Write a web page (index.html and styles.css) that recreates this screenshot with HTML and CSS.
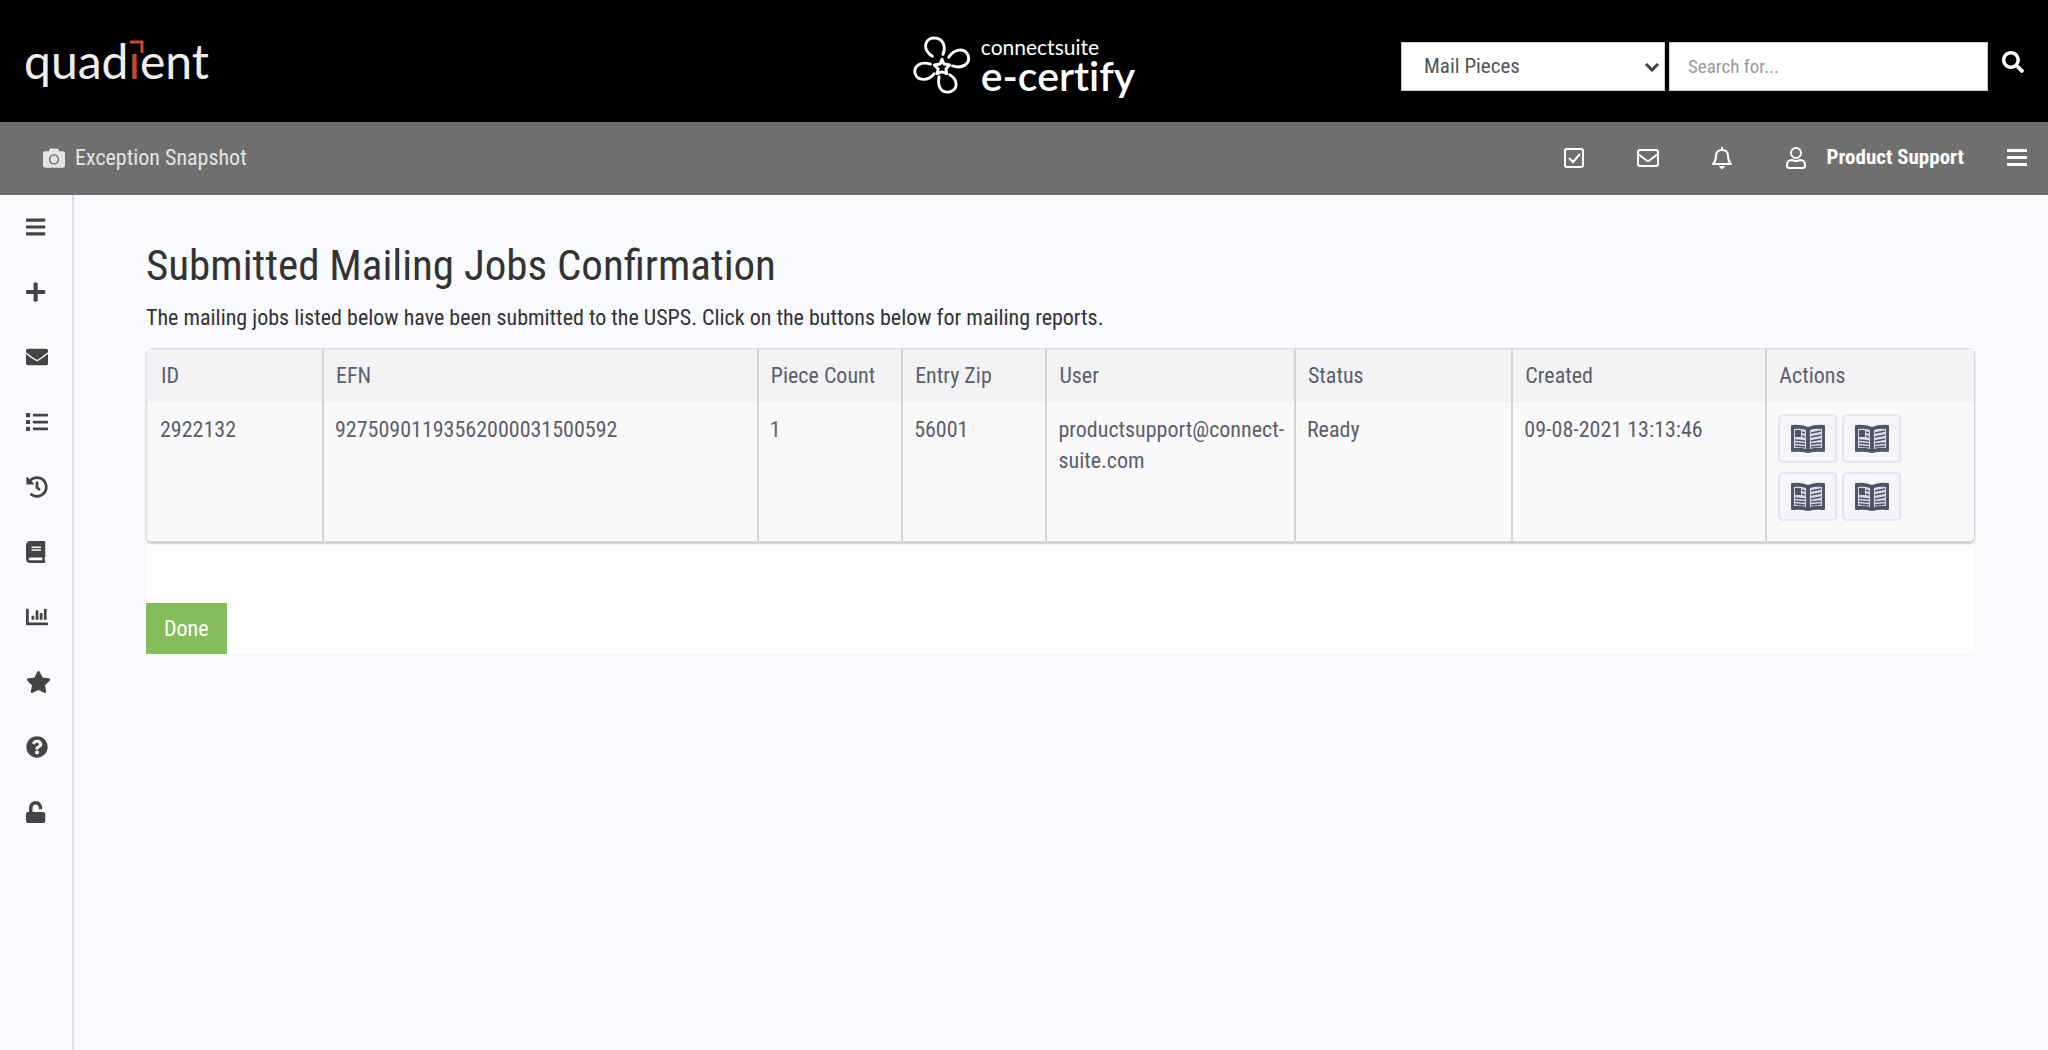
FILE: index.html
```
<!DOCTYPE html>
<html lang="en">
<head>
  <meta charset="UTF-8">
  <meta name="viewport" content="width=device-width, initial-scale=1.0">
  <title>Submitted Mailing Jobs Confirmation</title>
  <link rel="stylesheet" href="styles.css">
</head>
<body>
  <!-- shared icon shapes -->
  <svg class="sprite" aria-hidden="true">
    <symbol id="book-open" viewBox="0 0 36 30">
      <path d="M2 2Q10 1 18 4Q26 1 34 2V27Q26 26 18 28Q10 26 2 27Z" fill="#525566" stroke="#525566" stroke-width="2" stroke-linejoin="round"/>
      <path d="M4 5Q10 4 16 6V25Q10 23 4 24ZM20 6Q26 4 32 5V24Q26 23 20 25Z" fill="#d9dce5"/>
      <path d="M5 6h6v7H5z" fill="#525566"/>
      <path d="M12 8l3 1M12 12l3 1M5 16l10 1M5 19l10 1M5 22l10 1M21 9l10-2M21 13l10-2M21 17l10-2M21 20l10-1M21 23l10-1" fill="none" stroke="#525566" stroke-width="1.5"/>
    </symbol>
  </svg>

  <header class="top">
    <a href="#" class="logo" aria-label="quadient">quad<span class="logo-i">i<svg class="flag" viewBox="0 0 14 14"><path d="M0 0h14v14H0z" fill="#000"/><path d="M0 2h12v11" fill="none" stroke="#c8472f" stroke-width="3"/></svg></span>ent</a>

    <a href="#" class="brand">
      <svg class="flower" viewBox="0 0 60 60" fill="none" stroke="#fff" stroke-width="3" stroke-linecap="round">
        <path d="M20 21C9 14 12 2 22 2C32 2 34 12 31 19"/>
        <path d="M37 22C42 14 53 11 57 20C60 30 49 34 41 31"/>
        <path d="M18 29C8 26 1 31 2 38C4 47 16 47 22 39"/>
        <path d="M27 42C25 52 29 59 37 58C47 56 47 46 38 40"/>
        <path d="M30 24l2 5 6 1-4 4 1 5-5-2-5 2 1-5-4-4 6-1z" stroke-linejoin="round"/>
      </svg>
      <span class="brand-text">
        <span class="brand-small">connectsuite</span>
        <span class="brand-big">e-certify</span>
      </span>
    </a>

    <form class="search">
      <div class="select-wrap">
        <select aria-label="Search in">
          <option>Mail Pieces</option>
        </select>
        <svg class="chevron" viewBox="0 0 14 10"><path d="M1 2l6 6 6-6" fill="none" stroke="#444" stroke-width="3"/></svg>
      </div>
      <input type="text" placeholder="Search for..." aria-label="Search for">
      <button type="submit" class="search-btn" aria-label="Search">
        <svg viewBox="0 0 512 512"><path d="M505 442.700L405.300 343c-4.500-4.500-10.600-7-17-7H372c27.600-35.300 44-79.700 44-128C416 93.100 322.900 0 208 0S0 93.100 0 208s93.100 208 208 208c48.300 0 92.700-16.400 128-44v16.300c0 6.400 2.500 12.500 7 17l99.700 99.700c9.400 9.400 24.600 9.400 33.900 0l28.300-28.300c9.400-9.400 9.400-24.600.1-34zM208 336c-70.700 0-128-57.200-128-128 0-70.700 57.200-128 128-128 70.700 0 128 57.200 128 128 0 70.700-57.200 128-128 128z"/></svg>
      </button>
    </form>
  </header>

  <nav class="bar">
    <a href="#" class="snapshot">
      <svg class="icon" viewBox="0 0 512 512"><path d="M512 144v288c0 26.500-21.500 48-48 48H48c-26.500 0-48-21.500-48-48V144c0-26.500 21.500-48 48-48h88l12.300-32.900c7-18.700 24.900-31.100 44.900-31.100h125.500c20 0 37.900 12.400 44.900 31.100L376 96h88c26.500 0 48 21.500 48 48zM376 288c0-66.200-53.800-120-120-120s-120 53.800-120 120 53.800 120 120 120 120-53.800 120-120zm-32 0c0 48.500-39.500 88-88 88s-88-39.500-88-88 39.500-88 88-88 88 39.500 88 88z"/></svg>
      Exception Snapshot
    </a>
    <div class="bar-right">
      <a href="#" aria-label="Tasks"><svg class="icon" viewBox="0 0 22 22" fill="none" stroke="#fff" stroke-width="2"><rect x="2" y="2" width="18" height="18" rx="2"/><path d="M6 11l4 4 7-8"/></svg></a>
      <a href="#" aria-label="Messages"><svg class="icon" viewBox="0 0 22 22" fill="none" stroke="#fff" stroke-width="2"><rect x="1" y="3" width="20" height="16" rx="2"/><path d="M1 7l8 6q2 2 4 0l8-6"/></svg></a>
      <a href="#" aria-label="Alerts"><svg class="icon" viewBox="0 0 22 22" fill="none" stroke="#fff" stroke-width="2" stroke-linejoin="round"><path d="M11 0v3M2 17c3-3 3-5 3-8q0-6 6-6t6 6c0 3 0 5 3 8z"/><path d="M8 19h6q-1 3-3 3t-3-3z" fill="#fff" stroke="none"/></svg></a>
      <a href="#" class="user"><svg class="icon" viewBox="0 0 22 22" fill="none" stroke="#fff" stroke-width="2"><circle cx="11" cy="6" r="5"/><path d="M7 13q4 2 8 0q5 0 5 5v1q0 2-2 2H4q-2 0-2-2v-1q0-5 5-5z"/></svg>Product Support</a>
      <button type="button" class="menu" aria-label="Menu"><svg class="icon" viewBox="0 0 22 22"><path d="M1 2h20v3H1zM1 9h20v3H1zM1 16h20v3H1z"/></svg></button>
    </div>
  </nav>

  <div class="page">
    <aside class="side">
      <a href="#" aria-label="Menu"><svg class="icon" viewBox="0 0 512 512"><path d="M16 132h416c8.800 0 16-7.200 16-16V76c0-8.800-7.200-16-16-16H16C7.200 60 0 67.200 0 76v40c0 8.800 7.200 16 16 16zm0 160h416c8.800 0 16-7.200 16-16v-40c0-8.800-7.200-16-16-16H16c-8.800 0-16 7.200-16 16v40c0 8.800 7.200 16 16 16zm0 160h416c8.800 0 16-7.200 16-16v-40c0-8.800-7.200-16-16-16H16c-8.800 0-16 7.200-16 16v40c0 8.800 7.200 16 16 16z"/></svg></a>
      <a href="#" aria-label="Add"><svg class="icon" viewBox="0 0 512 512"><path d="M416 208H272V64c0-17.700-14.300-32-32-32h-32c-17.700 0-32 14.300-32 32v144H32c-17.700 0-32 14.300-32 32v32c0 17.700 14.300 32 32 32h144v144c0 17.700 14.300 32 32 32h32c17.700 0 32-14.300 32-32V304h144c17.700 0 32-14.300 32-32v-32c0-17.700-14.300-32-32-32z"/></svg></a>
      <a href="#" aria-label="Mail"><svg class="icon" viewBox="0 0 512 512"><path d="M502.300 190.800c3.900-3.100 9.700-.2 9.700 4.700V400c0 26.500-21.500 48-48 48H48c-26.500 0-48-21.500-48-48V195.600c0-5 5.700-7.800 9.700-4.700 22.400 17.400 52.100 39.500 154.100 113.600 21.100 15.400 56.700 47.800 92.200 47.600 35.700.3 72-32.800 92.300-47.600 102-74.100 131.600-96.300 154-113.700zM256 320c23.200.4 56.600-29.200 73.400-41.400 132.700-96.300 142.800-104.700 173.400-128.700 5.800-4.500 9.200-11.500 9.200-18.900v-19c0-26.500-21.500-48-48-48H48c-26.500 0-48 21.500-48 48v19c0 7.400 3.400 14.300 9.200 18.900 30.600 23.900 40.700 32.400 173.400 128.700 16.800 12.200 50.200 41.800 73.400 41.400z"/></svg></a>
      <a href="#" aria-label="Lists"><svg class="icon" viewBox="0 0 512 512"><path d="M16 48h64q16 0 16 16v64q0 16-16 16H16q-16 0-16-16V64q0-16 16-16zM16 208h64q16 0 16 16v64q0 16-16 16H16q-16 0-16-16v-64q0-16 16-16zM16 368h64q16 0 16 16v64q0 16-16 16H16q-16 0-16-16v-64q0-16 16-16zM176 64h320q16 0 16 16v32q0 16-16 16H176q-16 0-16-16V80q0-16 16-16zM176 224h320q16 0 16 16v32q0 16-16 16H176q-16 0-16-16v-32q0-16 16-16zM176 384h320q16 0 16 16v32q0 16-16 16H176q-16 0-16-16v-32q0-16 16-16z"/></svg></a>
      <a href="#" aria-label="History"><svg class="icon" viewBox="0 0 512 512"><path d="M504 255.500c.3 136.600-111.200 248.400-247.800 248.500-59 0-113.200-20.500-155.800-54.900-11.100-8.900-11.900-25.500-1.800-35.600l11.300-11.300c8.600-8.600 22.400-9.600 31.900-2C173.100 425.100 212.800 440 256 440c101.700 0 184-82.300 184-184 0-101.700-82.300-184-184-184-48.800 0-93.100 19-126.100 49.900l50.800 50.800c10.100 10.100 2.900 27.300-11.300 27.300H24c-8.800 0-16-7.200-16-16V38.600c0-14.300 17.200-21.400 27.300-11.300l49.400 49.400C129.200 34.100 189.600 8 256 8c136.800 0 247.700 110.800 248 247.500zm-180.900 78.800l9.800-12.600c8.100-10.500 6.300-25.500-4.200-33.700L288 256.300V152c0-13.300-10.700-24-24-24h-16c-13.300 0-24 10.700-24 24v135.700l65.400 50.900c10.500 8.100 25.500 6.300 33.700-4.200z"/></svg></a>
      <a href="#" aria-label="Address book"><svg class="icon" viewBox="0 0 512 512"><path d="M448 360V24c0-13.300-10.700-24-24-24H96C43 0 0 43 0 96v320c0 53 43 96 96 96h328c13.300 0 24-10.700 24-24v-16c0-7.500-3.500-14.300-8.900-18.700-4.200-15.400-4.200-59.300 0-74.700 5.400-4.300 8.900-11.100 8.900-18.600zM128 134c0-3.300 2.700-6 6-6h212c3.300 0 6 2.700 6 6v20c0 3.300-2.700 6-6 6H134c-3.300 0-6-2.700-6-6zm0 64c0-3.300 2.700-6 6-6h212c3.300 0 6 2.700 6 6v20c0 3.300-2.700 6-6 6H134c-3.300 0-6-2.700-6-6zm253.400 250H96c-17.700 0-32-14.300-32-32 0-17.600 14.400-32 32-32h285.400c-1.900 17.100-1.900 46.900 0 64z"/></svg></a>
      <a href="#" aria-label="Reports"><svg class="icon" viewBox="0 0 512 512"><path d="M332.800 320h38.400c6.400 0 12.800-6.400 12.800-12.800V172.800c0-6.400-6.400-12.800-12.800-12.800h-38.400c-6.400 0-12.800 6.400-12.800 12.800v134.400c0 6.400 6.400 12.800 12.800 12.800zm96 0h38.400c6.400 0 12.800-6.400 12.800-12.800V76.800c0-6.400-6.400-12.800-12.800-12.800h-38.400c-6.400 0-12.800 6.400-12.800 12.800v230.400c0 6.400 6.400 12.800 12.800 12.800zm-288 0h38.400c6.400 0 12.800-6.400 12.800-12.800v-70.400c0-6.400-6.400-12.800-12.800-12.800h-38.400c-6.400 0-12.800 6.400-12.800 12.800v70.400c0 6.400 6.400 12.800 12.800 12.800zm96 0h38.400c6.400 0 12.800-6.400 12.800-12.800V108.800c0-6.400-6.400-12.800-12.800-12.800h-38.400c-6.400 0-12.800 6.400-12.800 12.800v198.400c0 6.400 6.400 12.800 12.800 12.800zM496 384H64V80c0-8.800-7.200-16-16-16H16C7.200 64 0 71.200 0 80v336c0 17.700 14.300 32 32 32h464c8.800 0 16-7.200 16-16v-32c0-8.800-7.200-16-16-16z"/></svg></a>
      <a href="#" aria-label="Favorites"><svg class="icon icon-star" viewBox="0 0 576 512"><path d="M259.300 17.800L194 150.200 47.900 171.500c-26.200 3.800-36.700 36.100-17.700 54.600l105.700 103-25 145.500c-4.500 26.300 23.200 46 46.400 33.700L288 439.600l130.700 68.700c23.200 12.200 50.900-7.400 46.400-33.700l-25-145.500 105.700-103c19-18.500 8.500-50.800-17.700-54.600L382 150.200 316.700 17.800c-11.700-23.600-45.600-23.900-57.400 0z"/></svg></a>
      <a href="#" aria-label="Help"><svg class="icon" viewBox="0 0 512 512"><path d="M504 256c0 137-111 248-248 248S8 393 8 256C8 119.100 119 8 256 8s248 111.100 248 248zM262.700 90c-54.500 0-89.300 23-116.500 63.800-3.500 5.300-2.400 12.400 2.700 16.300l34.700 26.300c5.200 3.900 12.600 3 16.700-2.100 17.900-22.700 30.100-35.800 57.300-35.800 20.400 0 45.700 13.100 45.700 33 0 15-12.400 22.700-32.500 34C247.100 238.500 216 254.900 216 296v4c0 6.600 5.400 12 12 12h56c6.600 0 12-5.400 12-12v-1.300c0-28.500 83.200-29.600 83.200-106.700 0-58-60.200-102-116.500-102zM256 338c-25.400 0-46 20.600-46 46 0 25.400 20.600 46 46 46s46-20.600 46-46c0-25.400-20.600-46-46-46z"/></svg></a>
      <a href="#" aria-label="Unlock"><svg class="icon" viewBox="0 0 512 512"><path d="M400 256H152V152.900c0-39.600 31.700-72.500 71.300-72.900 40-.4 72.700 32.100 72.700 72v16c0 13.300 10.700 24 24 24h32c13.300 0 24-10.700 24-24v-16C376 68 307.500-.3 223.500 0 139.500.3 72 69.500 72 153.500V256H48c-26.500 0-48 21.500-48 48v160c0 26.500 21.500 48 48 48h352c26.500 0 48-21.500 48-48V304c0-26.500-21.500-48-48-48z"/></svg></a>
    </aside>

    <main class="content">
      <h1>Submitted Mailing Jobs Confirmation</h1>
      <p class="intro">The mailing jobs listed below have been submitted to the USPS. Click on the buttons below for mailing reports.</p>
      <div class="panel">
        <table class="jobs">
          <colgroup>
            <col class="c-id"><col class="c-efn"><col class="c-small"><col class="c-small"><col class="c-user"><col class="c-status"><col class="c-created"><col>
          </colgroup>
          <thead>
            <tr>
              <th>ID</th>
              <th>EFN</th>
              <th>Piece Count</th>
              <th>Entry Zip</th>
              <th>User</th>
              <th>Status</th>
              <th>Created</th>
              <th>Actions</th>
            </tr>
          </thead>
          <tbody>
            <tr>
              <td>2922132</td>
              <td>92750901193562000031500592</td>
              <td>1</td>
              <td>56001</td>
              <td>productsupport@connect-suite.com</td>
              <td>Ready</td>
              <td>09-08-2021 13:13:46</td>
              <td>
                <div class="actions">
                  <button type="button" aria-label="Report 1"><svg><use href="#book-open"/></svg></button>
                  <button type="button" aria-label="Report 2"><svg><use href="#book-open"/></svg></button>
                  <button type="button" aria-label="Report 3"><svg><use href="#book-open"/></svg></button>
                  <button type="button" aria-label="Report 4"><svg><use href="#book-open"/></svg></button>
                </div>
              </td>
            </tr>
          </tbody>
        </table>
        <button type="button" class="done">Done</button>
      </div>
    </main>
  </div>
</body>
</html>
```
FILE: styles.css
```
* {
  box-sizing: border-box;
}

body {
  margin: 0;
  min-height: 100vh;
  display: flex;
  flex-direction: column;
  background-color: #f9fafd;
  color: #333;
  font-family: "Roboto Condensed", Roboto, sans-serif;
  font-size: 22px;
  line-height: 31px;
}

a {
  color: inherit;
  text-decoration: none;
}

button, input, select {
  font-family: inherit;
  font-size: inherit;
}

svg {
  display: block;
}

.sprite {
  position: absolute;
  width: 0;
  height: 0;
}

.icon {
  width: 22px;
  height: 22px;
  fill: currentColor;
  flex: none;
}

.icon[fill="none"] {
  fill: none;
}

/* top header */
.top {
  display: grid;
  grid-template-columns: 1fr auto 1fr;
  align-items: center;
  height: 122px;
  padding: 0 24px;
  background-color: #000;
  color: #fff;
}

.logo {
  font-family: Lato, sans-serif;
  font-size: 48px;
  font-weight: 400;
  line-height: 48px;
  color: #eee;
}

.logo-i {
  position: relative;
  color: #c8472f;
}

.flag {
  position: absolute;
  top: 8px;
  left: 2px;
  width: 14px;
  height: 14px;
}

.brand {
  display: flex;
  align-items: center;
  gap: 10px;
  padding-top: 8px;
  font-family: Lato, sans-serif;
  font-variant-ligatures: none;
}

.flower {
  width: 58px;
  height: 58px;
}

.brand-text {
  display: flex;
  flex-direction: column;
}

.brand-small {
  font-size: 21px;
  line-height: 22px;
}

.brand-big {
  font-size: 41px;
  font-weight: 600;
  line-height: 36px;
}

.search {
  display: flex;
  justify-content: flex-end;
  align-items: center;
  gap: 4px;
  padding-top: 10px;
}

.select-wrap {
  position: relative;
  width: 264px;
}

.search select, .search input {
  width: 100%;
  height: 49px;
  border: 1px solid #ccc;
  border-radius: 0;
  background-color: #fff;
  color: #555;
}

.search select {
  padding: 0 22px;
  font-size: 21px;
  appearance: none;
}

.search input {
  width: 319px;
  padding: 0 18px;
  font-size: 19px;
}

.search input::placeholder {
  color: #999;
}

.chevron {
  position: absolute;
  top: 20px;
  right: 6px;
  width: 14px;
  height: 10px;
  pointer-events: none;
}

.search-btn {
  margin-left: 10px;
  padding: 0 0 8px;
  border: 0;
  background: none;
  fill: #fff;
}

.search-btn svg {
  width: 22px;
  height: 22px;
}

/* gray bar */
.bar {
  display: flex;
  justify-content: space-between;
  align-items: center;
  height: 73px;
  padding: 0 20px 2px 43px;
  background-color: #6f6f6f;
  color: #fff;
}

.snapshot {
  display: flex;
  align-items: center;
  gap: 10px;
  color: #e4e4e4;
}

.bar-right {
  display: flex;
  align-items: center;
  gap: 52px;
}

.user {
  display: flex;
  align-items: center;
  gap: 20px;
  font-size: 21px;
  font-weight: 700;
}

.menu {
  margin-left: -10px;
  padding: 0;
  border: 0;
  background: none;
  color: #fff;
}

/* page */
.page {
  display: flex;
  flex: 1;
}

.side {
  display: flex;
  flex-direction: column;
  gap: 43px;
  flex: none;
  width: 74px;
  padding: 21px 0 21px 26px;
  border-right: 2px solid #dcdde2;
  color: #444;
}

.icon-star {
  width: 25px;
}

.content {
  flex: 1;
  min-width: 0;
  padding: 44px 73px 44px 72px;
}

h1 {
  margin: 0 0 10px;
  font-size: 43px;
  font-weight: 400;
  line-height: 53px;
}

.intro {
  margin: 0 0 15px;
}

.panel {
  background-color: #fff;
}

.jobs {
  width: 100%;
  table-layout: fixed;
  border-collapse: separate;
  border-spacing: 0;
  border: 1px solid #d9dae0;
  border-radius: 5px;
  background-color: #f9f9f9;
  box-shadow: 0 2px 2px rgba(0, 0, 0, 0.2);
  color: #5c5f6b;
}

.jobs th, .jobs td {
  padding: 12px 6px 11px 11px;
  text-align: left;
  vertical-align: top;
  border-left: 2px solid #d5d5d8;
}

.jobs th:first-child, .jobs td:first-child {
  border-left-color: transparent;
}

.jobs th {
  padding: 11px 12px;
  font-weight: 400;
  background-color: #f3f3f6;
}

.c-id { width: 175px; }
.c-efn { width: 23.8%; }
.c-small { width: 7.9%; }
.c-user { width: 13.6%; }
.c-status { width: 11.9%; }
.c-created { width: 13.9%; }

.actions {
  display: flex;
  flex-wrap: wrap;
  gap: 9px 5px;
  max-width: 124px;
  padding-bottom: 9px;
}

.actions button {
  display: flex;
  align-items: center;
  justify-content: center;
  width: 59px;
  height: 49px;
  padding: 0;
  border: 2px solid #e6e6ec;
  border-radius: 5px;
  background-color: #f6f6fa;
}

.actions svg {
  width: 36px;
  height: 30px;
}

.done {
  display: block;
  margin-top: 61px;
  height: 51px;
  padding: 0 18px;
  border: 0;
  background-color: #85bd5a;
  color: #fff;
}
```
